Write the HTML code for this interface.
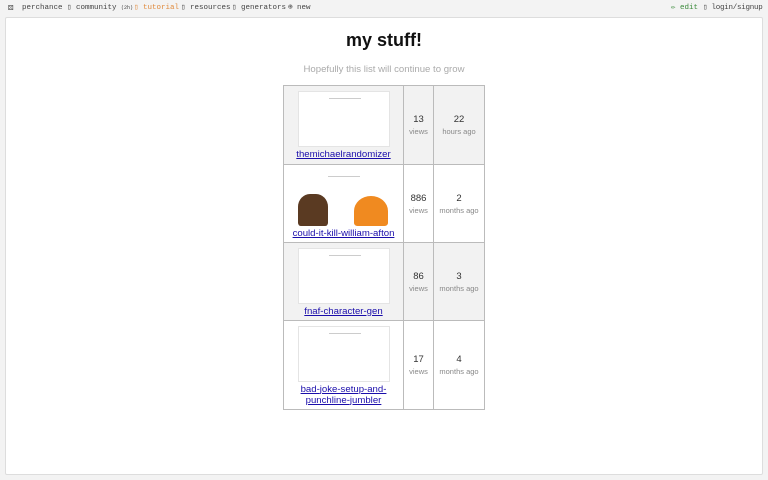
<!DOCTYPE html>
<html><head><meta charset="utf-8"><style>
*{margin:0;padding:0;box-sizing:border-box}
body{width:768px;height:480px;background:#f3f3f3;font-family:"Liberation Sans",sans-serif;position:relative;overflow:hidden}
.nav{position:absolute;top:0;left:0;width:768px;height:16px;font-family:"Liberation Mono",monospace;font-size:7.5px;color:#444;line-height:16px}
.nav span{position:absolute;top:0;white-space:nowrap}
.panel{position:absolute;left:5px;top:17px;width:758px;height:458px;background:#fff;border:1px solid #ddd;border-radius:2px}
h1{position:absolute;left:0;width:768px;top:30px;text-align:center;font-size:18px;font-weight:bold;color:#111}
.sub{position:absolute;left:0;width:768px;top:64px;text-align:center;font-size:9.6px;color:#aaa}
table{position:absolute;left:283px;top:85px;border-collapse:collapse;font-size:9.5px}
td{border:1px solid #bbb;text-align:center;vertical-align:middle;color:#333}
tr.g td{background:#f2f2f2}
td.a{width:120px;padding:3px 0 2px}
td.b{width:30px}td.c{width:51px}
.th{width:92px;height:56px;margin:0 auto 2px;background:#fff;border:1px solid #e4e4e4;position:relative}
.th i{position:absolute;left:30px;top:6px;width:32px;height:1px;background:#ccc}
a{color:#1a0dab;text-decoration:underline;font-size:9.6px;line-height:11px}
small{display:block;color:#888;font-size:7.5px;margin-top:2px}
</style></head><body>
<div class="nav">
<span style="left:8px;font-size:9px">⚄</span>
<span style="left:22px">perchance</span>
<span style="left:67px">▯ community <span style="position:static;font-size:5px">(2h)</span></span>
<span style="left:134px;color:#e08a3c">▯ tutorial</span>
<span style="left:181px">▯ resources</span>
<span style="left:232px">▯ generators</span>
<span style="left:288px">⊕ new</span>
<span style="left:671px;color:#3a8a3a">✏ edit</span>
<span style="left:703px;letter-spacing:-0.25px">▯ login/signup</span>
</div>
<div class="panel"></div>
<h1>my stuff!</h1>
<div class="sub">Hopefully this list will continue to grow</div>
<table>
<tr class="g" style="height:79px"><td class="a"><div class="th"><i></i></div><a>themichaelrandomizer</a></td><td class="b">13<small>views</small></td><td class="c">22<small>hours ago</small></td></tr>
<tr style="height:78px"><td class="a"><div class="th" style="border:none"><i></i><div style="position:absolute;left:0;top:24px;width:30px;height:32px;background:#5a3a22;border-radius:40% 40% 10% 10%"></div><div style="position:absolute;right:2px;top:26px;width:34px;height:30px;background:#f08a20;border-radius:50% 50% 10% 10%"></div></div><a>could-it-kill-william-afton</a></td><td class="b">886<small>views</small></td><td class="c">2<small>months ago</small></td></tr>
<tr class="g" style="height:78px"><td class="a"><div class="th"><i></i></div><a>fnaf-character-gen</a></td><td class="b">86<small>views</small></td><td class="c">3<small>months ago</small></td></tr>
<tr style="height:89px"><td class="a"><div class="th"><i></i></div><a>bad-joke-setup-and-<br>punchline-jumbler</a></td><td class="b">17<small>views</small></td><td class="c">4<small>months ago</small></td></tr>
</table>
</body></html>
